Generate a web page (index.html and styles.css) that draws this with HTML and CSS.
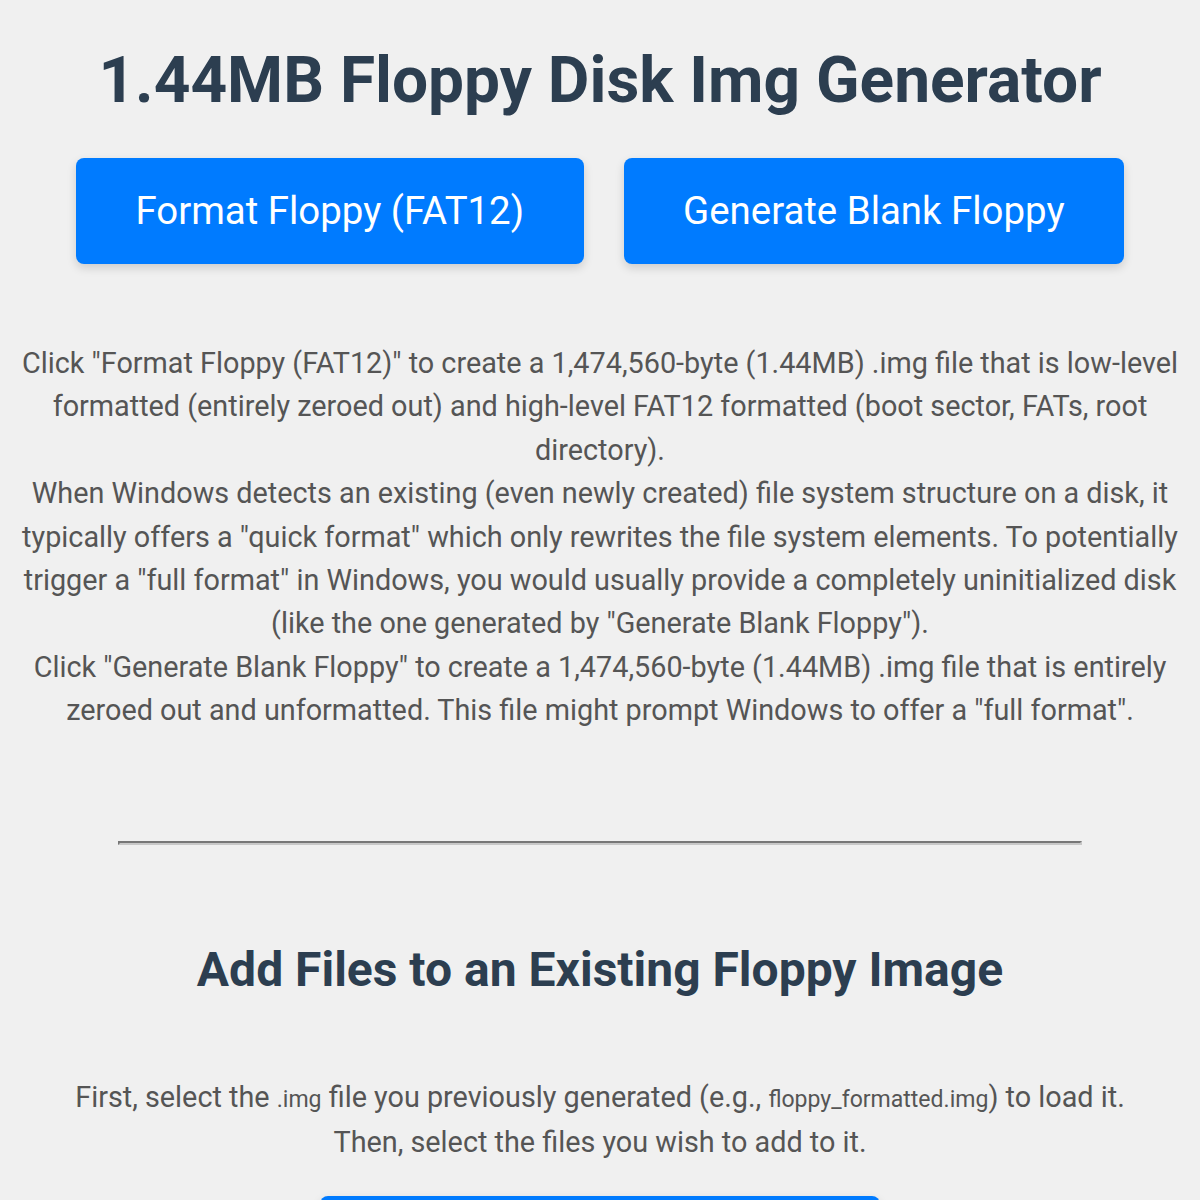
FILE: index.html
```html
<!DOCTYPE html>
<html lang="en">
<head>
<meta charset="utf-8">
<title>1.44MB Floppy Disk Img Generator</title>
<link rel="stylesheet" href="styles.css">
</head>
<body>
<div class="container">
  <h1 class="title">1.44MB Floppy Disk Img Generator</h1>
  <div class="actions">
    <button class="btn">Format Floppy (FAT12)</button>
    <button class="btn">Generate Blank Floppy</button>
  </div>
  <p class="info intro">Click "Format Floppy (FAT12)" to create a 1,474,560-byte (1.44MB) .img file that is low-level formatted (entirely zeroed out) and high-level FAT12 formatted (boot sector, FATs, root directory).<br>When Windows detects an existing (even newly created) file system structure on a disk, it typically offers a "quick format" which only rewrites the file system elements. To potentially trigger a "full format" in Windows, you would usually provide a completely uninitialized disk (like the one generated by "Generate Blank Floppy").<br>Click "Generate Blank Floppy" to create a 1,474,560-byte (1.44MB) .img file that is entirely zeroed out and unformatted. This file might prompt Windows to offer a "full format".</p>
  <hr class="divider">
  <h2 class="subtitle">Add Files to an Existing Floppy Image</h2>
  <p class="info steps">First, select the <span class="code">.img</span> file you previously generated (e.g., <span class="code">floppy_formatted.img</span>) to load it.<br>Then, select the files you wish to add to it.</p>
  <button class="btn btn-wide">Select Floppy Image (.img)</button>
</div>
</body>
</html>
```
FILE: styles.css
```css
html, body {
  margin: 0;
  padding: 0;
  background: #f0f0f0;
}

body {
  font-family: Roboto, "Noto Sans", "Liberation Sans", sans-serif;
}

.container {
  padding: 0 20px;
  text-align: center;
}

.title {
  margin: 43px 0 40px;
  font-size: 64px;
  font-weight: 700;
  line-height: normal;
  color: #2c3e50;
}

.actions {
  display: flex;
  justify-content: center;
  gap: 40px;
}

.btn {
  font-family: inherit;
  font-size: 38.4px;
  line-height: 45px;
  color: #ffffff;
  background: #007bff;
  border: none;
  border-radius: 8px;
  padding: 30px 59.5px 31px;
  box-shadow: 0 4px 10px rgba(0, 0, 0, 0.15);
  cursor: pointer;
}

.info {
  font-size: 28.8px;
  line-height: 43.4px;
  color: #555555;
}

.intro {
  margin: 78px 0 0;
}

.divider {
  width: 960px;
  height: 0;
  margin: 108px auto 0;
  border-style: solid;
  border-width: 2px;
  border-color: #777777 #c8c8c8 #c8c8c8 #777777;
}

.subtitle {
  margin: 96px 0 78px;
  font-size: 48px;
  font-weight: 700;
  line-height: normal;
  color: #2c3e50;
}

.steps {
  margin: 0 0 32px;
}

.code {
  font-size: 0.8em;
}

.btn-wide {
  width: 560px;
}
```
